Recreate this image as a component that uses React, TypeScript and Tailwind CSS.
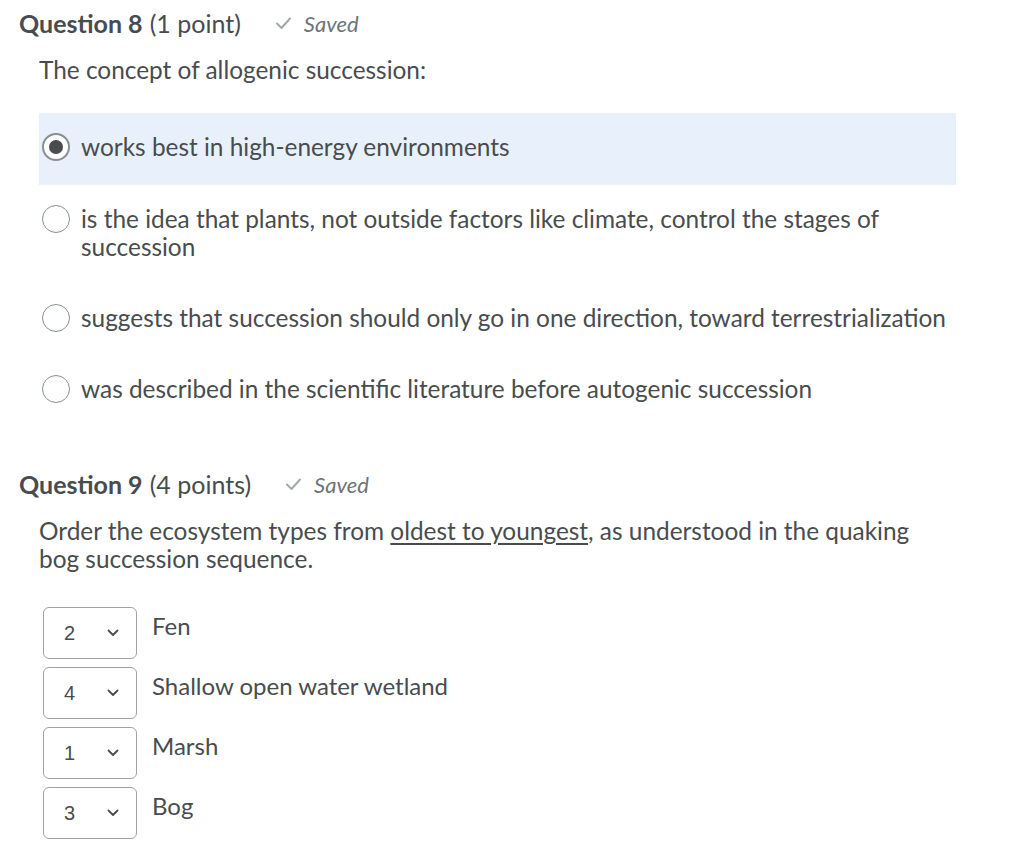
import React from "react";

const TEXT = "text-[#494c4e]";

function Check() {
  return (
    <svg width="17" height="14" viewBox="0 0 17 14" fill="none" className="mr-[12px]">
      <path d="M2 7.5 L6.5 12 L15 2.5" stroke="#a4a8ab" strokeWidth="2" strokeLinecap="round" strokeLinejoin="round" />
    </svg>
  );
}

function Header({ num, pts }: { num: number; pts: string }) {
  return (
    <div className={`flex items-center pl-[19px] h-[30px] ${TEXT}`}>
      <span className="text-[25px] leading-[30px] font-bold">Question {num}</span>
      <span className="text-[25px] leading-[30px] ml-[7px]">({pts})</span>
      <span className="flex items-center ml-[34px] text-[#6e7376] italic text-[22px]">
        <Check />
        Saved
      </span>
    </div>
  );
}

function Radio({ checked }: { checked?: boolean }) {
  return (
    <span
      className={`shrink-0 w-[28px] h-[28px] rounded-full bg-white flex items-center justify-center ${
        checked ? "border-2 border-[#8a8f92]" : "border border-[#8a8f92]"
      }`}
    >
      {checked && <span className="w-[14px] h-[14px] rounded-full bg-[#494c4e]" />}
    </span>
  );
}

function Option({ text, checked }: { text: string; checked?: boolean }) {
  return (
    <div className={`flex items-start pl-[3px] ${checked ? "bg-[#e8f1fb] pt-[20px] pb-[24px]" : "pt-[20px] pb-[23px]"}`}>
      <Radio checked={checked} />
      <span className="ml-[11px] text-[24.4px] leading-[28px]">{text}</span>
    </div>
  );
}

function Chevron() {
  return (
    <svg width="12" height="8" viewBox="0 0 12 8" fill="none">
      <path d="M1.5 1.5 L6 6 L10.5 1.5" stroke="#494c4e" strokeWidth="1.8" strokeLinecap="round" strokeLinejoin="round" />
    </svg>
  );
}

function SelectRow({ value, label }: { value: string; label: string }) {
  return (
    <div className="flex items-start">
      <div className="w-[94px] h-[52px] border border-[#9ea2a5] rounded-[6px] flex items-center justify-between pl-[20px] pr-[17px] bg-white">
        <span className="text-[20px] leading-[24px] font-['Liberation_Sans',Arial,sans-serif]">{value}</span>
        <Chevron />
      </div>
      <span className="ml-[15px] mt-[5px] text-[24px] leading-[28px]">{label}</span>
    </div>
  );
}

export default function App() {
  return (
    <div className={`w-[1024px] h-[864px] bg-white overflow-hidden font-['Lato','Open_Sans',sans-serif] ${TEXT}`}>
      <div className="pt-[8px]">
        <Header num={8} pts="1 point" />
        <p className="pl-[39px] mt-[18px] text-[24.4px] leading-[28px]">The concept of allogenic succession:</p>
        <div className="ml-[39px] w-[917px] mt-[29px]">
          <Option checked text="works best in high-energy environments" />
          <Option text="is the idea that plants, not outside factors like climate, control the stages of succession" />
          <Option text="suggests that succession should only go in one direction, toward terrestrialization" />
          <Option text="was described in the scientific literature before autogenic succession" />
        </div>
      </div>
      <div className="mt-[43px]">
        <Header num={9} pts="4 points" />
        <p className="ml-[39px] w-[900px] mt-[18px] text-[24.4px] leading-[28px]">
          Order the ecosystem types from <span className="underline underline-offset-[3px]">oldest to youngest</span>, as understood in the quaking bog succession sequence.
        </p>
        <div className="ml-[43px] mt-[34px] flex flex-col gap-[8px]">
          <SelectRow value="2" label="Fen" />
          <SelectRow value="4" label="Shallow open water wetland" />
          <SelectRow value="1" label="Marsh" />
          <SelectRow value="3" label="Bog" />
        </div>
      </div>
    </div>
  );
}
